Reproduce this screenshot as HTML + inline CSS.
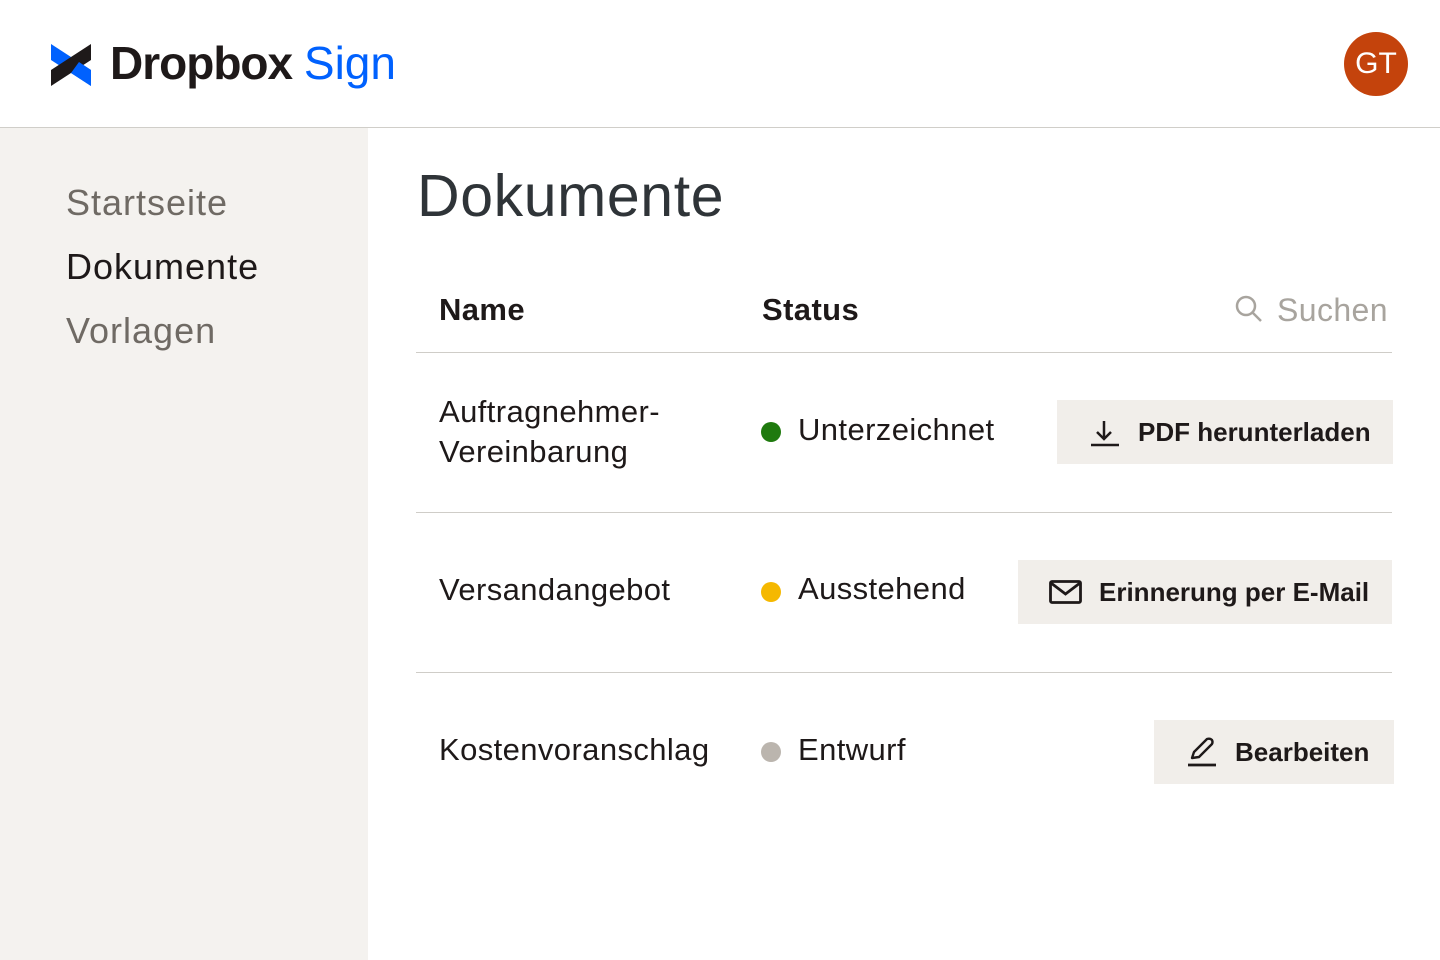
<!DOCTYPE html>
<html><head><meta charset="utf-8"><style>
*{margin:0;padding:0;box-sizing:border-box}
body{width:1440px;height:960px;background:#fff;font-family:"Liberation Sans",sans-serif;color:#1e1919;position:relative;overflow:hidden}
.hdr{position:absolute;left:0;top:0;width:1440px;height:128px;border-bottom:1px solid #d0cec9;background:#fff}
.logo{position:absolute;left:110px;top:36px;font-size:46px;font-weight:bold;letter-spacing:-1px;color:#1e1919}
.logo span{color:#0061fe;font-weight:normal;letter-spacing:0}
.av{position:absolute;left:1344px;top:32px;width:64px;height:64px;border-radius:50%;background:#c4430c;color:#fff;font-size:30px;text-align:center;line-height:64px}
.side{position:absolute;left:0;top:128px;width:368px;height:832px;background:#f4f2ef}
.nav{position:absolute;left:66px;font-size:36px;color:#6f6a64;letter-spacing:1px}
h1{position:absolute;left:417px;top:162px;font-size:59px;font-weight:normal;color:#2f3438;letter-spacing:0.6px}
.t{position:absolute;font-size:31px;letter-spacing:0.4px}
.b{font-weight:bold}
.line{position:absolute;left:416px;width:976px;height:1px;background:#cfcdc8}
.dot{position:absolute;width:20px;height:20px;border-radius:50%}
.btn{position:absolute;height:64px;background:#f1eeea;font-size:26px;font-weight:bold;line-height:64px}
.btn svg{position:absolute}
</style></head><body>
<div class="hdr">
<svg style="position:absolute;left:50px;top:42px" width="42" height="46" viewBox="0 0 42 46">
<polygon points="1,2 41,28 41,44 1,18" fill="#0061fe"/>
<polygon points="41,2 1,28 1,44 41,18" fill="#1e1919"/>
<polygon points="21,31 41,44 41,28 29,20" fill="#0061fe"/>
</svg>
<div class="logo">Dropbox <span>Sign</span></div>
<div class="av">GT</div>
</div>
<div class="side">
<div class="nav" style="top:54px">Startseite</div>
<div class="nav" style="top:118px;color:#1e1919">Dokumente</div>
<div class="nav" style="top:182px">Vorlagen</div>
</div>
<h1>Dokumente</h1>
<div class="t b" style="left:439px;top:292px">Name</div>
<div class="t b" style="left:762px;top:292px">Status</div>
<svg style="position:absolute;left:1234px;top:294px" width="30" height="30" viewBox="0 0 30 30"><circle cx="12" cy="12" r="9" fill="none" stroke="#a8a49e" stroke-width="2.5"/><line x1="19" y1="19" x2="27" y2="27" stroke="#a8a49e" stroke-width="2.5"/></svg>
<div class="t" style="left:1277px;top:292px;color:#a8a49e;font-size:32px">Suchen</div>
<div class="line" style="top:352px"></div>
<div class="t" style="left:439px;top:392px;line-height:40px">Auftragnehmer-<br>Vereinbarung</div>
<div class="dot" style="left:761px;top:422px;background:#1f7a0e"></div>
<div class="t" style="left:798px;top:412px">Unterzeichnet</div>
<div class="btn" style="left:1057px;top:400px;width:336px;padding-left:81px">
<svg style="left:32px;top:18px" width="30" height="30" viewBox="0 0 30 30"><path d="M15 3V21M8 14L15 21L22 14" fill="none" stroke="#1e1919" stroke-width="2.5"/><line x1="2" y1="27" x2="30" y2="27" stroke="#1e1919" stroke-width="2.5"/></svg>PDF herunterladen</div>
<div class="line" style="top:512px"></div>
<div class="t" style="left:439px;top:572px">Versandangebot</div>
<div class="dot" style="left:761px;top:582px;background:#f5b800"></div>
<div class="t" style="left:798px;top:571px">Ausstehend</div>
<div class="btn" style="left:1018px;top:560px;width:374px;padding-left:81px">
<svg style="left:31px;top:20px" width="34" height="26" viewBox="0 0 34 26"><rect x="1.5" y="1.5" width="30" height="21" rx="1.5" fill="none" stroke="#1e1919" stroke-width="2.8"/><path d="M2 3L16.5 14L31 3" fill="none" stroke="#1e1919" stroke-width="2.8"/></svg>Erinnerung per E-Mail</div>
<div class="line" style="top:672px"></div>
<div class="t" style="left:439px;top:732px">Kostenvoranschlag</div>
<div class="dot" style="left:761px;top:742px;background:#bbb5ae"></div>
<div class="t" style="left:798px;top:732px">Entwurf</div>
<div class="btn" style="left:1154px;top:720px;width:240px;padding-left:81px">
<svg style="left:32px;top:16px" width="32" height="32" viewBox="0 0 32 32"><path d="M6 22L8 16L21 3Q24 2 26 4Q27 6 26 8L13 21Z" fill="none" stroke="#1e1919" stroke-width="2.4" stroke-linejoin="round"/><line x1="2" y1="29" x2="30" y2="29" stroke="#1e1919" stroke-width="2.8"/></svg>Bearbeiten</div>
</body></html>
